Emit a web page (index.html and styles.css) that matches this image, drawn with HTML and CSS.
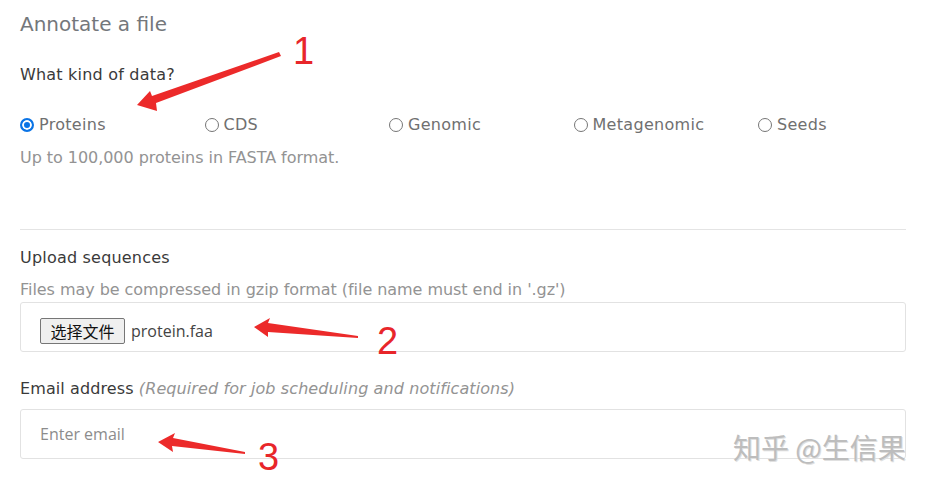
FILE: index.html
```
<!DOCTYPE html>
<html lang="en">
<head>
<meta charset="utf-8">
<title>Annotate a file</title>
<link rel="stylesheet" href="styles.css">
</head>
<body>
<div class="page">
  <h2 class="title">Annotate a file</h2>
  <div class="label">What kind of data?</div>
  <div class="radios">
    <label class="radio"><span class="dot checked"></span>Proteins</label>
    <label class="radio"><span class="dot"></span>CDS</label>
    <label class="radio"><span class="dot"></span>Genomic</label>
    <label class="radio"><span class="dot"></span>Metagenomic</label>
    <label class="radio"><span class="dot"></span>Seeds</label>
  </div>
  <div class="help">Up to 100,000 proteins in FASTA format.</div>
  <hr class="rule">
  <div class="label">Upload sequences</div>
  <div class="help help-upload">Files may be compressed in gzip format (file name must end in '.gz')</div>
  <div class="box file-box">
    <span class="file-btn">选择文件</span><span class="file-name">protein.faa</span>
  </div>
  <div class="label email-label">Email address <em class="hint">(Required for job scheduling and notifications)</em></div>
  <div class="box email-box"><span class="placeholder">Enter email</span></div>

  <svg class="arrows" width="931" height="486" viewBox="0 0 931 486">
    <polygon fill="#ec2a2a" points="137,105 150,91 152,96 279,52 281,56 156,103 157,111"/>
    <polygon fill="#ec2a2a" points="254,327 270,318 268,323 358,336 358,338 268,332 268,337"/>
    <polygon fill="#ec2a2a" points="158,442 175,433 173,438 245,452 245,454 172,446 173,452"/>
  </svg>
  <span class="num num1">1</span>
  <span class="num num2">2</span>
  <span class="num num3">3</span>
  <span class="watermark">知乎 @生信果</span>
</div>
</body>
</html>
```
FILE: styles.css
```
html, body {
  margin: 0;
  padding: 0;
  background: #ffffff;
}
.page {
  position: relative;
  width: 931px;
  height: 486px;
  box-sizing: border-box;
  padding: 11px 25px 0 20px;
  font-family: "DejaVu Sans", "Open Sans", sans-serif;
  color: #3a3a3a;
  overflow: hidden;
}
.title {
  margin: 0;
  font-size: 20px;
  font-weight: normal;
  color: #74777b;
  line-height: 26px;
}
.label {
  font-size: 16px;
  line-height: 20px;
  letter-spacing: 0.2px;
  color: #3a3a3a;
  margin-top: 28px;
}
.radios {
  display: grid;
  grid-template-columns: repeat(5, 184.5px);
  margin-top: 30px;
  font-size: 16px;
  line-height: 20px;
  letter-spacing: 0.3px;
  color: #707070;
}
.radio {
  display: flex;
  align-items: center;
}
.dot {
  width: 14px;
  height: 14px;
  border: 1px solid #767676;
  border-radius: 50%;
  margin-right: 5px;
  box-sizing: border-box;
  background: #fff;
}
.dot.checked {
  border: 2px solid #0a74e6;
  box-shadow: inset 0 0 0 2px #fff;
  background: #0a74e6;
}
.help {
  font-size: 16px;
  line-height: 20px;
  letter-spacing: -0.05px;
  color: #939393;
  margin-top: 13px;
}
.rule {
  border: 0;
  border-top: 1px solid #e4e4e4;
  margin: 61px 0 0 0;
}
.rule + .label {
  margin-top: 18px;
}
.help-upload {
  margin-top: 12px;
}
.box {
  box-sizing: border-box;
  border: 1px solid #e2e2e2;
  border-radius: 3px;
  display: flex;
  align-items: center;
  padding-left: 19px;
  letter-spacing: 0;
}
.file-box {
  height: 50px;
  margin-top: 2px;
  align-items: flex-start;
  padding-top: 15px;
}
.file-btn {
  box-sizing: border-box;
  height: 26px;
  width: 85px;
  display: flex;
  align-items: center;
  justify-content: center;
  border: 1px solid #767676;
  border-radius: 2px;
  background: #efefef;
  font-family: "Noto Sans CJK SC", sans-serif;
  font-size: 16px;
  color: #111;
}
.file-name {
  margin-left: 6px;
  font-family: "Open Sans", sans-serif;
  font-size: 16px;
  line-height: 26px;
  color: #444;
}
.email-label {
  margin-top: 27px;
  letter-spacing: 0.1px;
}
.hint {
  color: #939393;
}
.email-box {
  height: 50px;
  margin-top: 10px;
}
.placeholder {
  font-family: "Open Sans", sans-serif;
  font-size: 16px;
  color: #8c8c8c;
}
.arrows {
  position: absolute;
  left: 0;
  top: 0;
  pointer-events: none;
}
.num {
  position: absolute;
  font-family: "Liberation Sans", sans-serif;
  font-size: 38px;
  line-height: 1;
  color: #e8262a;
}
.num1 { left: 293px; top: 32px; }
.num2 { left: 377px; top: 322px; }
.num3 { left: 258px; top: 438px; }
.watermark {
  position: absolute;
  left: 733px;
  top: 429px;
  font-family: "Noto Sans CJK SC", sans-serif;
  font-size: 28px;
  line-height: 36px;
  color: #bdbdbd;
  text-shadow: 1px 1px 0 #e0e0e0;
}
```
